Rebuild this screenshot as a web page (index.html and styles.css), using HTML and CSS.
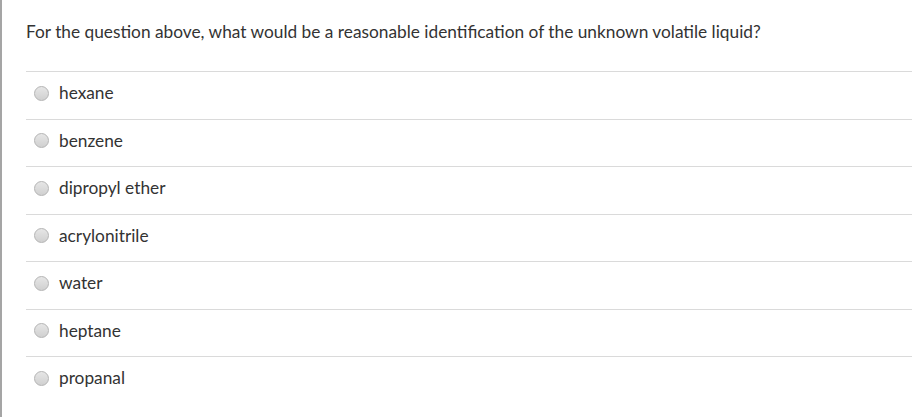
FILE: index.html
```html
<!DOCTYPE html>
<html>
<head>
<meta charset="utf-8">
<link rel="stylesheet" href="styles.css">
</head>
<body>
<div class="question">
  <p class="prompt">For the question above, what would be a reasonable identification of the unknown volatile liquid?</p>
  <div class="answers">
    <label class="answer"><span class="radio"></span><span class="label">hexane</span></label>
    <label class="answer"><span class="radio"></span><span class="label">benzene</span></label>
    <label class="answer"><span class="radio"></span><span class="label">dipropyl ether</span></label>
    <label class="answer"><span class="radio"></span><span class="label">acrylonitrile</span></label>
    <label class="answer"><span class="radio"></span><span class="label">water</span></label>
    <label class="answer"><span class="radio"></span><span class="label">heptane</span></label>
    <label class="answer"><span class="radio"></span><span class="label">propanal</span></label>
  </div>
</div>
</body>
</html>
```
FILE: styles.css
```css
html, body {
  margin: 0;
  padding: 0;
  background: #fff;
}
body {
  font-family: Lato, "Open Sans", sans-serif;
  color: #333;
  width: 919px;
  height: 417px;
  overflow: hidden;
}
.question {
  border-left: 2px solid #a5a5a5;
  height: 417px;
  box-sizing: border-box;
  padding: 0 7px 0 24px;
}
.prompt {
  margin: 0;
  padding-top: 20px;
  height: 71px;
  box-sizing: border-box;
  font-size: 17.3px;
  line-height: 24px;
}
.answers {
  display: flex;
  flex-direction: column;
}
.answer {
  display: flex;
  align-items: center;
  border-top: 1px solid #dadada;
  height: 47.5px;
  box-sizing: border-box;
  padding-left: 8px;
  padding-bottom: 4px;
  font-size: 17.3px;
}
.radio {
  width: 15px;
  height: 15px;
  border-radius: 50%;
  border: 1px solid #b4b4b4;
  background: linear-gradient(#e6e6e6, #d0d0d0);
  box-sizing: border-box;
  margin-right: 10px;
  flex: none;
}
.label {
  line-height: 22px;
}
```
